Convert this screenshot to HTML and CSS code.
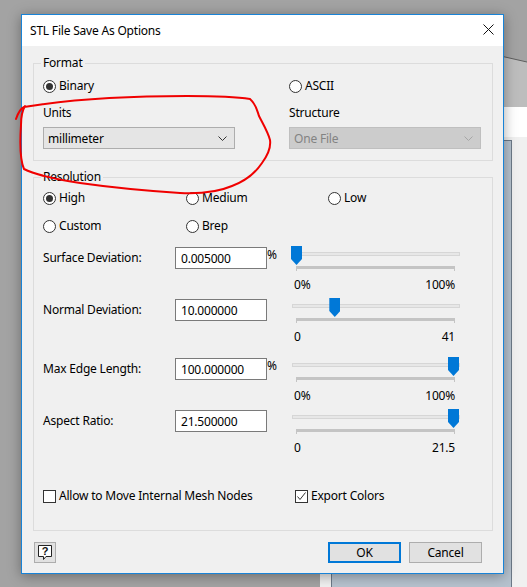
FILE: index.html
```html
<!DOCTYPE html>
<html lang="en">
<head>
    <meta charset="UTF-8">
    <title>STL File Save As Options</title>
    <link rel="stylesheet" href="styles.css">
</head>
<body>
<div class="desktop">
    <!-- window behind the dialog -->
    <svg class="backdrop" width="527" height="587" viewBox="0 0 527 587">
        <rect x="0" y="0" width="527" height="587" fill="#a3a3a3"/>
        <polygon points="320,15 527,62 527,107 320,107" fill="#bdbdbd"/>
        <line x1="320" y1="15" x2="527" y2="62" stroke="#5e5e5e" stroke-width="1"/>
        <rect x="320" y="107" width="207" height="30" fill="#ffffff"/>
        <rect x="320" y="137" width="207" height="450" fill="#f0f0f0"/>
        <rect x="331.5" y="140.5" width="180" height="450" fill="#b6c2ce" stroke="#6c7988"/>
    </svg>

    <div class="dialog">
        <div class="titlebar">
            <span class="title">STL File Save As Options</span>
            <svg class="close" width="11" height="11" viewBox="0 0 11 11">
                <path d="M0.5 0.5 L10.5 10.5 M10.5 0.5 L0.5 10.5" stroke="#111" stroke-width="1"/>
            </svg>
        </div>

        <div class="content">
            <fieldset class="group format">
                <legend>Format</legend>
                <div class="format-grid">
                    <label class="radio"><span class="dot checked"></span>Binary</label>
                    <label class="radio"><span class="dot"></span>ASCII</label>
                    <div class="field-label">Units</div>
                    <div class="field-label">Structure</div>
                    <div class="combo">
                        <span>millimeter</span>
                        <svg width="9" height="5" viewBox="0 0 9 5"><path d="M0.5 0.5 L4.5 4.5 L8.5 0.5" fill="none" stroke="#333"/></svg>
                    </div>
                    <div class="combo disabled">
                        <span>One File</span>
                        <svg width="9" height="5" viewBox="0 0 9 5"><path d="M0.5 0.5 L4.5 4.5 L8.5 0.5" fill="none" stroke="#a6a6a6"/></svg>
                    </div>
                </div>
            </fieldset>

            <fieldset class="group resolution">
                <legend>Resolution</legend>
                <div class="res-grid">
                    <label class="radio"><span class="dot checked"></span>High</label>
                    <label class="radio"><span class="dot"></span>Medium</label>
                    <label class="radio"><span class="dot"></span>Low</label>
                    <label class="radio"><span class="dot"></span>Custom</label>
                    <label class="radio"><span class="dot"></span>Brep</label>
                </div>

                <div class="param first">
                    <div class="param-label">Surface Deviation:</div>
                    <input class="num" type="text" value="0.005000">
                    <div class="unit">%</div>
                    <div class="slider">
                        <div class="track"></div>
                        <div class="thumb" style="--v:0"></div>
                        <div class="ticks"></div>
                        <div class="scale"><span>0%</span><span>100%</span></div>
                    </div>
                </div>

                <div class="param">
                    <div class="param-label">Normal Deviation:</div>
                    <input class="num" type="text" value="10.000000">
                    <div class="unit"></div>
                    <div class="slider">
                        <div class="track"></div>
                        <div class="thumb" style="--v:0.244"></div>
                        <div class="ticks"></div>
                        <div class="scale"><span>0</span><span>41</span></div>
                    </div>
                </div>

                <div class="param spaced">
                    <div class="param-label">Max Edge Length:</div>
                    <input class="num" type="text" value="100.000000">
                    <div class="unit">%</div>
                    <div class="slider">
                        <div class="track"></div>
                        <div class="thumb" style="--v:1"></div>
                        <div class="ticks"></div>
                        <div class="scale"><span>0%</span><span>100%</span></div>
                    </div>
                </div>

                <div class="param">
                    <div class="param-label">Aspect Ratio:</div>
                    <input class="num" type="text" value="21.500000">
                    <div class="unit"></div>
                    <div class="slider">
                        <div class="track"></div>
                        <div class="thumb" style="--v:1"></div>
                        <div class="ticks"></div>
                        <div class="scale"><span>0</span><span>21.5</span></div>
                    </div>
                </div>

                <div class="checks">
                    <label class="check"><span class="box"></span>Allow to Move Internal Mesh Nodes</label>
                    <label class="check">
                        <span class="box">
                            <svg width="11" height="11" viewBox="0 0 11 11"><path d="M1.5 5.5 L4 8.5 L9.5 1.5" fill="none" stroke="#333" stroke-width="1"/></svg>
                        </span>Export Colors
                    </label>
                </div>
            </fieldset>
        </div>

        <div class="buttons">
            <button class="btn help">
                <svg width="16" height="17" viewBox="0 0 16 17">
                    <path d="M1.5 1.5 H14.5 V12.5 H9 L6.5 15.5 V12.5 H1.5 Z" fill="#fff" stroke="#222"/>
                    <text x="8" y="10.5" text-anchor="middle" class="qmark">?</text>
                </svg>
            </button>
            <div class="spacer"></div>
            <button class="btn default">OK</button>
            <button class="btn">Cancel</button>
        </div>
    </div>

    <!-- red hand-drawn markup -->
    <svg class="markup" width="527" height="587" viewBox="0 0 527 587">
        <path d="M16 119 C18 113 20 109 24 107 C60 101 120 96 187 96 C215 96 238 97 250 99 C256 104 257 110 259 116 C263 124 268 132 270 140 C271 147 268 155 262 163 C256 172 248 180 232 186 C218 192 200 194 180 193 C150 191 115 188 80 183 C55 179 35 175 24 169 C20 160 20 140 21 125 C21 117 22 111 25 106"
              fill="none" stroke="#f00000" stroke-width="2" stroke-linecap="round"/>
    </svg>
</div>
</body>
</html>
```

FILE: styles.css
```css
body {
    margin: 0;
    font-family: "Noto Sans", "Open Sans", sans-serif;
    font-size: 12px;
    letter-spacing: -0.2px;
    color: #000;
}
.desktop {
    position: relative;
    width: 527px;
    height: 587px;
    overflow: hidden;
}
.backdrop {
    position: absolute;
    left: 0;
    top: 0;
}
.markup {
    position: absolute;
    left: 0;
    top: 0;
    pointer-events: none;
}

/* dialog window */
.dialog {
    position: absolute;
    left: 21px;
    top: 14px;
    width: 481px;
    border: 1px solid #1883d7;
    background: #f0f0f0;
    box-shadow: 0 2px 12px rgba(0,0,0,0.35);
}
.titlebar {
    height: 31px;
    background: #fff;
    display: flex;
    align-items: center;
    padding: 0 9px 0 8px;
}
.title {
    flex: 1;
    line-height: 16px;
}
.close {
    margin-top: -2px;
}
.content {
    padding: 9px 10px 0 11px;
}

/* group boxes */
.group {
    margin: 0;
    border: 1px solid #dcdcdc;
    padding: 7px 9px 11px 9px;
    min-inline-size: 0;
}
.group legend {
    padding: 0 2px;
    margin-left: -2px;
    line-height: 16px;
}
.resolution {
    margin-top: 8px;
    padding: 5px 9px 26px 9px;
}
.format-grid {
    display: grid;
    grid-template-columns: 246px 1fr;
}
.format-grid .field-label {
    margin-top: 11px;
    line-height: 16px;
}
.format-grid .combo {
    margin-top: 6px;
}

/* radios and checkboxes */
.radio, .check {
    display: flex;
    align-items: center;
    gap: 3px;
    line-height: 16px;
    white-space: nowrap;
}
.dot {
    width: 13px;
    height: 13px;
    box-sizing: border-box;
    border: 1px solid #333;
    border-radius: 50%;
    background: #fff;
    display: flex;
    align-items: center;
    justify-content: center;
}
.dot.checked::after {
    content: "";
    width: 7px;
    height: 7px;
    border-radius: 50%;
    background: #333;
}
.box {
    width: 13px;
    height: 13px;
    box-sizing: border-box;
    border: 1px solid #333;
    background: #fff;
    display: flex;
    align-items: center;
    justify-content: center;
}
.res-grid {
    display: grid;
    grid-template-columns: 143px 142px 1fr;
    row-gap: 12px;
}

/* combo boxes */
.combo {
    width: 192px;
    height: 22px;
    box-sizing: border-box;
    border: 1px solid #adadad;
    background: #e5e5e5;
    display: flex;
    align-items: center;
    padding: 0 4px 0 4px;
}
.combo span {
    flex: 1;
}
.combo svg {
    margin-right: 3px;
}
.combo.disabled {
    background: #cccccc;
    border-color: #bfbfbf;
    color: #838383;
}

/* deviation rows */
.param {
    display: grid;
    grid-template-columns: 132px 92px 24px 169px;
    align-items: start;
    margin-top: 6px;
}
.param.first {
    margin-top: 13px;
}
.param.spaced {
    margin-top: 13px;
}
.param-label {
    line-height: 22px;
}
.num {
    width: 92px;
    height: 22px;
    box-sizing: border-box;
    border: 1px solid #7a7a7a;
    padding: 0 5px;
    margin: 0;
    font: inherit;
    letter-spacing: inherit;
    color: #000;
    background: #fff;
}
.unit {
    line-height: 16px;
}
.slider {
    position: relative;
    margin-top: -1px;
    height: 47px;
}
.track {
    margin: 6px 0 0 1px;
    width: 168px;
    height: 4px;
    box-sizing: border-box;
    border: 1px solid #d6d6d6;
    background: #e7e7e7;
}
.thumb {
    position: absolute;
    top: 0;
    left: calc(var(--v) * 157px);
    width: 11px;
    height: 19px;
    background: #0078d7;
    clip-path: polygon(0 0, 100% 0, 100% 68%, 50% 100%, 0 68%);
}
.ticks {
    position: relative;
    margin: 10px 0 0 5px;
    width: 159px;
    height: 3px;
    background: #c4c4c4;
}
.ticks::before, .ticks::after {
    content: "";
    position: absolute;
    top: 0;
    width: 1px;
    height: 5px;
    background: #c4c4c4;
}
.ticks::before { left: 0; }
.ticks::after { right: 0; }
.scale {
    display: flex;
    justify-content: space-between;
    margin: 8px 0 0 3px;
    width: 161px;
    line-height: 16px;
}
.checks {
    display: grid;
    grid-template-columns: 252px 1fr;
    margin-top: 32px;
}

/* bottom buttons */
.buttons {
    display: flex;
    gap: 8px;
    padding: 11px 21px 10px 12px;
}
.spacer {
    flex: 1;
}
.btn {
    width: 73px;
    height: 21px;
    box-sizing: border-box;
    border: 1px solid #adadad;
    background: #e1e1e1;
    font: inherit;
    letter-spacing: inherit;
    color: #000;
    padding: 0;
}
.btn.default {
    border: 2px solid #0078d7;
}
.btn.help {
    width: 22px;
    display: flex;
    align-items: center;
    justify-content: center;
}
.qmark {
    font-family: "Liberation Sans", sans-serif;
    font-weight: bold;
    font-size: 11px;
    fill: #111;
}
```
